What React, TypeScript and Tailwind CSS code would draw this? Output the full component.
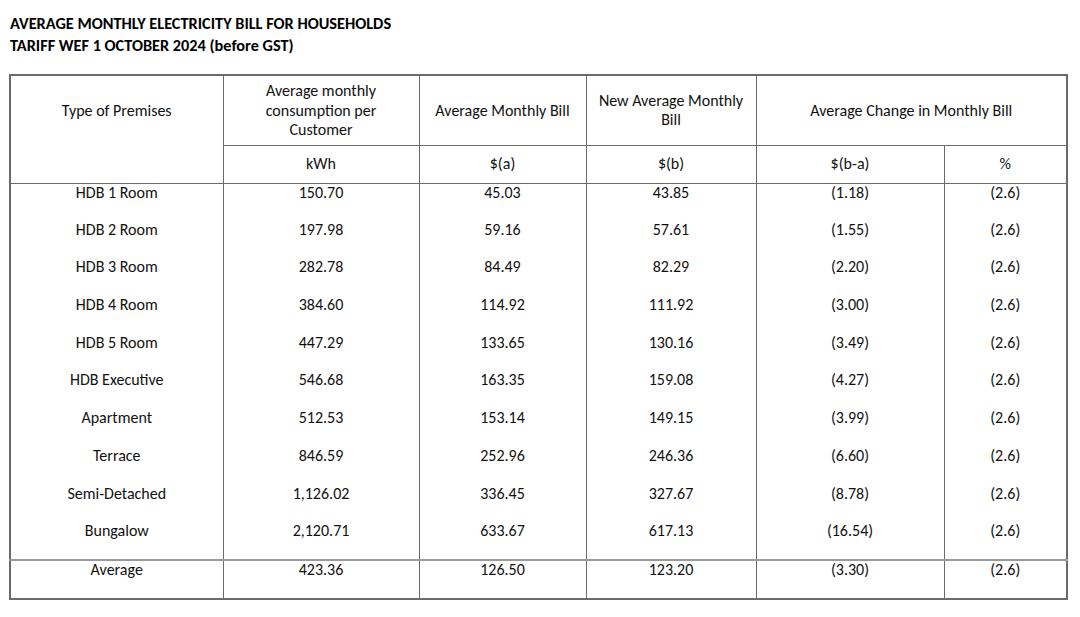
const rows = [
  ["HDB 1 Room", "150.70", "45.03", "43.85", "(1.18)", "(2.6)"],
  ["HDB 2 Room", "197.98", "59.16", "57.61", "(1.55)", "(2.6)"],
  ["HDB 3 Room", "282.78", "84.49", "82.29", "(2.20)", "(2.6)"],
  ["HDB 4 Room", "384.60", "114.92", "111.92", "(3.00)", "(2.6)"],
  ["HDB 5 Room", "447.29", "133.65", "130.16", "(3.49)", "(2.6)"],
  ["HDB Executive", "546.68", "163.35", "159.08", "(4.27)", "(2.6)"],
  ["Apartment", "512.53", "153.14", "149.15", "(3.99)", "(2.6)"],
  ["Terrace", "846.59", "252.96", "246.36", "(6.60)", "(2.6)"],
  ["Semi-Detached", "1,126.02", "336.45", "327.67", "(8.78)", "(2.6)"],
  ["Bungalow", "2,120.71", "633.67", "617.13", "(16.54)", "(2.6)"],
];

const average = ["Average", "423.36", "126.50", "123.20", "(3.30)", "(2.6)"];

export default function App() {
  return (
    <div className="w-[1080px] h-[617px] bg-white text-[#111] font-['Carlito','Lato',sans-serif] text-[16px] leading-[19.5px]">
      <div className="pl-[10px] pt-[12px] font-bold text-[16.3px] leading-[22px] text-black">
        <div>AVERAGE MONTHLY ELECTRICITY BILL FOR HOUSEHOLDS</div>
        <div>TARIFF WEF 1 OCTOBER 2024 (before GST)</div>
      </div>

      <table className="ml-[9px] mt-[18px] table-fixed border-collapse border-2 border-[#6b6b6b] text-center">
        <colgroup>
          <col className="w-[213px]" />
          <col className="w-[196px]" />
          <col className="w-[167px]" />
          <col className="w-[170px]" />
          <col className="w-[188px]" />
          <col className="w-[123px]" />
        </colgroup>
        <thead>
          <tr className="h-[70px]">
            <td rowSpan={2} className="border border-[#6b6b6b] pb-[38px]">Type of Premises</td>
            <td className="border border-[#6b6b6b] px-8">Average monthly consumption per Customer</td>
            <td className="border border-[#6b6b6b]">Average Monthly Bill</td>
            <td className="border border-[#6b6b6b] px-3">New Average Monthly Bill</td>
            <td colSpan={2} className="border border-[#6b6b6b]">Average Change in Monthly Bill</td>
          </tr>
          <tr className="h-[38px]">
            <td className="border border-[#6b6b6b]">kWh</td>
            <td className="border border-[#6b6b6b]">$(a)</td>
            <td className="border border-[#6b6b6b]">$(b)</td>
            <td className="border border-[#6b6b6b]">$(b-a)</td>
            <td className="border border-[#6b6b6b]">%</td>
          </tr>
        </thead>
        <tbody>
          {rows.map((r, i) => (
            <tr key={i} className="h-[37.7px]">
              {r.map((c, j) => (
                <td key={j} className={`border-x border-[#6b6b6b] align-top ${i === 0 ? "border-t border-t-[#6b6b6b]" : ""}`}>
                  <div className="-mt-[1px]">{c}</div>
                </td>
              ))}
            </tr>
          ))}
          <tr className="h-[39px]">
            {average.map((c, j) => (
              <td key={j} className="border border-[#6b6b6b] border-t-2 border-t-[#9a9a9a] align-top">
                <div className="-mt-[1px]">{c}</div>
              </td>
            ))}
          </tr>
        </tbody>
      </table>
    </div>
  );
}
